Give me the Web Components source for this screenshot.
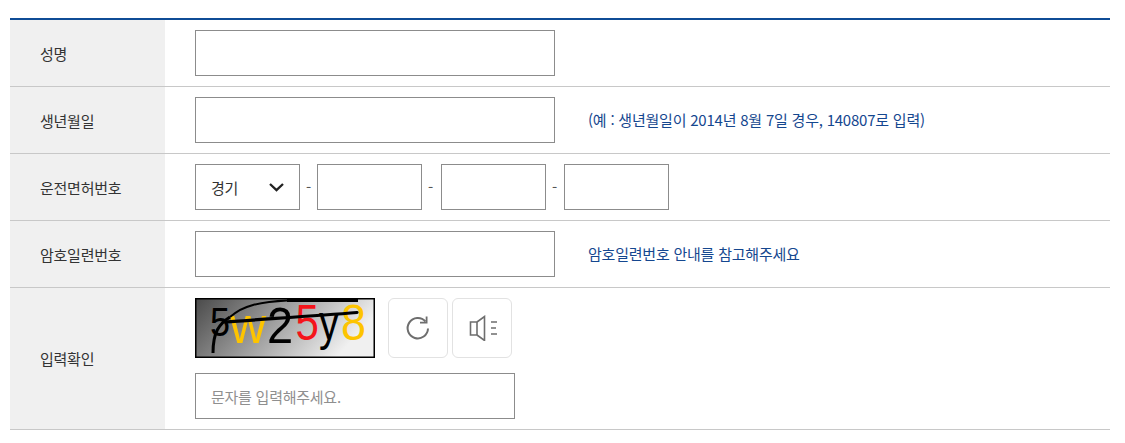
<!DOCTYPE html>
<html lang="ko">
<head>
<meta charset="utf-8">
<title>본인확인</title>
<style>
  body {
    margin: 0;
    padding: 18px 15px 0 10px;
    background: #fff;
    font-family: "Noto Sans CJK KR", "Noto Sans", sans-serif;
    font-size: 15px;
    letter-spacing: -0.25px;
    color: #333;
  }
</style>
</head>
<body>
<form-table>
  <form-row label="성명">
    <text-field></text-field>
  </form-row>
  <form-row label="생년월일">
    <text-field></text-field>
    <form-hint>(예 : 생년월일이 2014년 8월 7일 경우, 140807로 입력)</form-hint>
  </form-row>
  <form-row label="운전면허번호">
    <license-number></license-number>
  </form-row>
  <form-row label="암호일련번호">
    <text-field></text-field>
    <form-hint>암호일련번호 안내를 참고해주세요</form-hint>
  </form-row>
  <form-row label="입력확인">
    <captcha-box></captcha-box>
  </form-row>
</form-table>

<script>
class FormTable extends HTMLElement {
  connectedCallback() {
    const shadowRoot = this.attachShadow({ mode: 'open' });
    shadowRoot.innerHTML = `
      <style>
        :host {
          display: block;
          border-top: 2px solid #0f4c96;
        }
      </style>
      <slot></slot>`;
  }
}
customElements.define('form-table', FormTable);

class FormRow extends HTMLElement {
  connectedCallback() {
    const shadowRoot = this.attachShadow({ mode: 'open' });
    shadowRoot.innerHTML = `
      <style>
        :host {
          display: grid;
          grid-template-columns: 155px 1fr;
          border-bottom: 1px solid #c8c8c8;
        }
        .label {
          display: flex;
          align-items: center;
          padding-left: 30px;
          background: #f0f0f0;
          color: #333;
        }
        .content {
          display: flex;
          align-items: center;
          padding: 10px 30px;
        }
      </style>
      <div class="label"></div>
      <div class="content"><slot></slot></div>`;
    shadowRoot.querySelector('.label').textContent = this.getAttribute('label');
  }
}
customElements.define('form-row', FormRow);

class TextField extends HTMLElement {
  connectedCallback() {
    const shadowRoot = this.attachShadow({ mode: 'open' });
    shadowRoot.innerHTML = `
      <style>
        :host {
          display: block;
          width: 360px;
          flex-shrink: 0;
        }
        input {
          display: block;
          box-sizing: border-box;
          width: 100%;
          height: 46px;
          padding: 0 15px;
          border: 1px solid #8c8c8c;
          border-radius: 0;
          outline: none;
          background: #fff;
          font: inherit;
          letter-spacing: inherit;
          color: #333;
        }
        input::placeholder {
          color: #8f8f8f;
          opacity: 1;
        }
      </style>
      <input type="text">`;
    const placeholder = this.getAttribute('placeholder');
    if (placeholder) shadowRoot.querySelector('input').placeholder = placeholder;
  }
}
customElements.define('text-field', TextField);

class FormHint extends HTMLElement {
  connectedCallback() {
    const shadowRoot = this.attachShadow({ mode: 'open' });
    shadowRoot.innerHTML = `
      <style>
        :host {
          display: block;
          margin: 0 0 1px 33px;
          letter-spacing: -0.22px;
          color: #15478f;
        }
      </style>
      <slot></slot>`;
  }
}
customElements.define('form-hint', FormHint);

class SelectBox extends HTMLElement {
  connectedCallback() {
    const shadowRoot = this.attachShadow({ mode: 'open' });
    shadowRoot.innerHTML = `
      <style>
        :host {
          display: block;
          position: relative;
          width: 105px;
        }
        select {
          display: block;
          box-sizing: border-box;
          width: 100%;
          height: 46px;
          padding: 0 15px;
          border: 1px solid #8c8c8c;
          border-radius: 0;
          outline: none;
          appearance: none;
          background: #fff;
          font: inherit;
          letter-spacing: inherit;
          color: #333;
        }
        svg {
          position: absolute;
          top: 19px;
          right: 16px;
          pointer-events: none;
        }
      </style>
      <select><option>경기</option></select>
      <svg width="15" height="9" viewBox="0 0 15 9" fill="none" stroke="#222" stroke-width="2.3"><path d="M1 1l6.5 6.2L14 1"/></svg>`;
  }
}
customElements.define('select-box', SelectBox);

class LicenseNumber extends HTMLElement {
  connectedCallback() {
    const shadowRoot = this.attachShadow({ mode: 'open' });
    shadowRoot.innerHTML = `
      <style>
        :host {
          display: grid;
          grid-template-columns: 105px 17px 105px 19px 105px 18px 105px;
          align-items: center;
        }
        span {
          padding: 0 0 1px 6px;
          color: #555;
        }
        text-field {
          width: 105px;
        }
      </style>
      <select-box></select-box>
      <span>-</span><text-field></text-field>
      <span>-</span><text-field></text-field>
      <span>-</span><text-field></text-field>`;
  }
}
customElements.define('license-number', LicenseNumber);

class CaptchaImage extends HTMLElement {
  connectedCallback() {
    const shadowRoot = this.attachShadow({ mode: 'open' });
    shadowRoot.innerHTML = `
      <style>
        :host {
          display: block;
          width: 180px;
          height: 60px;
          letter-spacing: 0;
        }
        svg {
          display: block;
          overflow: visible;
        }
        text {
          font-family: "Liberation Sans", sans-serif;
        }
      </style>
      <svg width="180" height="60" viewBox="0 0 180 60">
        <defs>
          <linearGradient id="shade" x1="0" y1="0" x2="1" y2="0.3">
            <stop offset="0" stop-color="#4a4a4a"/>
            <stop offset="1" stop-color="#f0f0f0"/>
          </linearGradient>
        </defs>
        <rect x="0.75" y="0.75" width="178.5" height="58.5" fill="url(#shade)" stroke="#000" stroke-width="1.5"/>
        <text font-size="36" transform="translate(15 37.5) scale(1 1.12)" fill="#000">5</text>
        <text font-size="50" transform="translate(35 45)" fill="#fdc400">w</text>
        <text font-size="47" transform="translate(72 45) scale(1 1.06)" fill="#000">2</text>
        <text font-size="42" transform="translate(100.5 42) scale(1 1.19)" fill="#f4141a">5</text>
        <text font-size="40" transform="translate(124 42) scale(1 1.25)" fill="#000">y</text>
        <text font-size="45" transform="translate(146 42) scale(1 1.11)" fill="#fdc400">8</text>
        <path d="M35 19C42 13 50 9 58 7C70 4 82 3 92 2.5" fill="none" stroke="#000" stroke-width="2"/>
        <path d="M92 2.5H163" fill="none" stroke="#000" stroke-width="3.2"/>
        <path d="M30 24C70 21 120 18 162 14.5" fill="none" stroke="#000" stroke-width="3.2" stroke-linecap="round"/>
        <path d="M35 19C24 26 18 34 18 55" fill="none" stroke="#000" stroke-width="3"/>
      </svg>`;
  }
}
customElements.define('captcha-image', CaptchaImage);

class IconButton extends HTMLElement {
  connectedCallback() {
    const shadowRoot = this.attachShadow({ mode: 'open' });
    shadowRoot.innerHTML = `
      <style>
        :host {
          display: block;
        }
        button {
          display: flex;
          align-items: center;
          justify-content: center;
          box-sizing: border-box;
          width: 60px;
          height: 60px;
          padding: 0;
          border: 1px solid #e2e2e2;
          border-radius: 6px;
          background: #fff;
        }
      </style>
      <button type="button"><slot></slot></button>`;
  }
}
customElements.define('icon-button', IconButton);

class CaptchaBox extends HTMLElement {
  connectedCallback() {
    const shadowRoot = this.attachShadow({ mode: 'open' });
    shadowRoot.innerHTML = `
      <style>
        :host {
          display: grid;
          gap: 15px;
        }
        .tools {
          display: flex;
          gap: 4px;
        }
        captcha-image {
          margin-right: 9px;
        }
        text-field {
          width: 320px;
        }
      </style>
      <div class="tools">
        <captcha-image></captcha-image>
        <icon-button>
          <svg width="26" height="26" viewBox="0 0 26 26" fill="none" stroke="#6e6e6e" stroke-width="2">
            <path d="M20.5 6.5A10.2 10.2 0 1 0 23 13.5"/>
            <path d="M15 7.6h6.6V1.6" stroke-width="1.8"/>
          </svg>
        </icon-button>
        <icon-button>
          <svg width="30" height="26" viewBox="0 0 30 26" fill="none" stroke="#6e6e6e" stroke-width="1.6">
            <path d="M3.5 7h6.5v13H3.5z"/>
            <path d="M10 7l7.5-5.5v24L10 20"/>
            <path d="M24 7h6M24 13h5M24 19h6"/>
          </svg>
        </icon-button>
      </div>
      <text-field placeholder="문자를 입력해주세요."></text-field>`;
  }
}
customElements.define('captcha-box', CaptchaBox);
</script>
</body>
</html>
